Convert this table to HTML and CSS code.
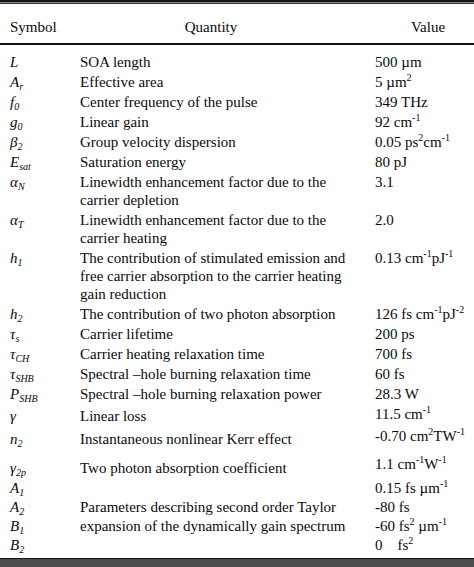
FILE: index.html
```html
<!DOCTYPE html>
<html>
<head>
<meta charset="utf-8">
<link rel="stylesheet" href="styles.css">
</head>
<body>
<div class="sheet">
  <div class="rule-top"></div>
  <table class="params">
    <colgroup>
      <col class="c-sym"><col class="c-qty"><col class="c-val">
    </colgroup>
    <thead>
      <tr><th class="h-sym">Symbol</th><th class="h-qty">Quantity</th><th class="h-val">Value</th></tr>
    </thead>
    <tbody>
      <tr class="first"><td class="sym"><i>L</i></td><td class="qty">SOA length</td><td class="val">500 µm</td></tr>
      <tr><td class="sym"><i>A<sub>r</sub></i></td><td class="qty">Effective area</td><td class="val">5 µm<sup>2</sup></td></tr>
      <tr><td class="sym"><i>f<sub>0</sub></i></td><td class="qty">Center frequency of the pulse</td><td class="val">349 THz</td></tr>
      <tr><td class="sym"><i>g<sub>0</sub></i></td><td class="qty">Linear gain</td><td class="val">92 cm<sup>-1</sup></td></tr>
      <tr><td class="sym"><i>β<sub>2</sub></i></td><td class="qty">Group velocity dispersion</td><td class="val">0.05 ps<sup>2</sup>cm<sup>-1</sup></td></tr>
      <tr><td class="sym"><i>E<sub>sat</sub></i></td><td class="qty">Saturation energy</td><td class="val">80 pJ</td></tr>
      <tr><td class="sym"><i>α<sub>N</sub></i></td><td class="qty">Linewidth enhancement factor due to the carrier depletion</td><td class="val">3.1</td></tr>
      <tr><td class="sym"><i>α<sub>T</sub></i></td><td class="qty">Linewidth enhancement factor due to the carrier heating</td><td class="val">2.0</td></tr>
      <tr><td class="sym"><i>h<sub>1</sub></i></td><td class="qty">The contribution of stimulated emission and free carrier absorption to the carrier heating gain reduction</td><td class="val">0.13 cm<sup>-1</sup>pJ<sup>-1</sup></td></tr>
      <tr><td class="sym"><i>h<sub>2</sub></i></td><td class="qty">The contribution of two photon absorption</td><td class="val">126 fs cm<sup>-1</sup>pJ<sup>-2</sup></td></tr>
      <tr><td class="sym"><i>τ<sub>s</sub></i></td><td class="qty">Carrier lifetime</td><td class="val">200 ps</td></tr>
      <tr><td class="sym"><i>τ<sub>CH</sub></i></td><td class="qty">Carrier heating relaxation time</td><td class="val">700 fs</td></tr>
      <tr><td class="sym"><i>τ<sub>SHB</sub></i></td><td class="qty">Spectral –hole burning relaxation time</td><td class="val">60 fs</td></tr>
      <tr><td class="sym"><i>P<sub>SHB</sub></i></td><td class="qty">Spectral –hole burning relaxation power</td><td class="val">28.3 W</td></tr>
      <tr class="tall t1"><td class="sym"><i>γ</i></td><td class="qty">Linear loss</td><td class="val">11.5 cm<sup>-1</sup></td></tr>
      <tr class="tall t2"><td class="sym"><i>n<sub>2</sub></i></td><td class="qty">Instantaneous nonlinear Kerr effect</td><td class="val">-0.70 cm<sup>2</sup>TW<sup>-1</sup></td></tr>
      <tr class="tall t3"><td class="sym"><i>γ<sub>2p</sub></i></td><td class="qty">Two photon absorption coefficient</td><td class="val">1.1 cm<sup>-1</sup>W<sup>-1</sup></td></tr>
      <tr class="tight"><td class="sym"><i>A<sub>1</sub></i></td><td rowspan="4" class="qty span">Parameters describing second order Taylor expansion of the dynamically gain spectrum</td><td class="val">0.15 fs µm<sup>-1</sup></td></tr>
      <tr class="tight"><td class="sym"><i>A<sub>2</sub></i></td><td class="val">-80 fs</td></tr>
      <tr class="tight"><td class="sym"><i>B<sub>1</sub></i></td><td class="val">-60 fs<sup>2</sup> µm<sup>-1</sup></td></tr>
      <tr class="tight"><td class="sym"><i>B<sub>2</sub></i></td><td class="val">0&nbsp;&nbsp;&nbsp;&nbsp;fs<sup>2</sup></td></tr>
    </tbody>
  </table>
  <div class="rule-bottom"></div>
</div>
</body>
</html>
```

FILE: styles.css
```css
html, body {
  margin: 0;
  padding: 0;
  background: #ffffff;
}

.sheet {
  width: 474px;
  height: 567px;
  overflow: hidden;
  font-family: "Liberation Serif", "Times New Roman", serif;
  font-size: 15px;
  color: #0a0a0a;
}

.rule-top {
  height: 4px;
  background: linear-gradient(#111 0 2px, #8a8a8a 2px 3px, #333 3px 4px);
}

.params {
  width: 474px;
  border-collapse: collapse;
  table-layout: fixed;
}

.c-sym { width: 72px; }
.c-qty { width: 298px; }
.c-val { width: 104px; }

.params th {
  font-weight: normal;
  line-height: 18px;
  padding: 14px 0 7px;
  border-bottom: 2px solid #111;
}

.params th.h-sym { text-align: left; padding-left: 10px; }
.params th.h-qty { text-align: center; padding-right: 20px; }
.params th.h-val { text-align: center; padding-left: 12px; }

.params td {
  box-sizing: border-box;
  line-height: 18px;
  padding: 1px 0;
  vertical-align: top;
  text-align: left;
}

.params td.sym { padding-left: 10px; }
.params td.qty { padding-left: 8px; padding-right: 20px; }
.params td.val { padding-left: 5px; }

.params tr.first td { padding-top: 8px; }

.params i { font-style: italic; }

sub {
  font-size: 10px;
  vertical-align: -3px;
  line-height: 0;
}

sup {
  font-size: 10px;
  vertical-align: 6px;
  line-height: 0;
}

.params tr.tall td { padding-bottom: 0; }
.params tr.t1 td { height: 22px; }
.params tr.t1 td.sym, .params tr.t1 td.qty { padding-top: 3px; }
.params tr.t2 td { height: 28px; }
.params tr.t2 td.sym, .params tr.t2 td.qty { padding-top: 4px; }
.params tr.t3 td { height: 25px; }
.params tr.t3 td.sym, .params tr.t3 td.qty { padding-top: 5px; }

.params tr.tight td {
  padding-top: 0;
  padding-bottom: 0;
  height: 19px;
  line-height: 19px;
}
.params tr.tight td.span {
  vertical-align: middle;
}

.rule-bottom {
  margin-top: 3px;
  height: 12px;
  background: linear-gradient(#111 0 1px, #4d4d4d 1px 100%);
}
```
